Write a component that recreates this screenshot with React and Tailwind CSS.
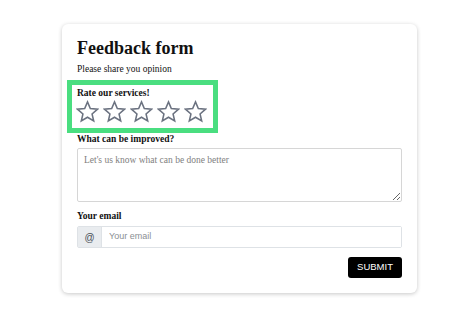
import React from "react";

const Star = () => (
  <svg width="23" height="23" viewBox="0 0 24 24" fill="none" stroke="#6b7280" strokeWidth="1.6" strokeLinejoin="miter">
    <polygon points="12,2 14.94,8.95 22.46,9.6 16.76,14.55 18.47,21.9 12,18 5.53,21.9 7.24,14.55 1.54,9.6 9.06,8.95" />
  </svg>
);

export default function App() {
  return (
    <div className="w-[474px] h-[320px] bg-white overflow-hidden pt-[24px]" style={{ fontFamily: '"Liberation Serif", "Times New Roman", serif' }}>
      <div className="ml-[62px] w-[355px] h-[269px] rounded-[6px] bg-white shadow-[0_1px_4px_rgba(0,0,0,0.22)] px-[15px] pt-[13px] text-[#111]">
        <h2 className="text-[18px] leading-[22px] font-bold">Feedback form</h2>
        <p className="mt-[4px] text-[9.5px] leading-[12px]">Please share you opinion</p>
        <div className="mt-[10px] -ml-[5px] w-[141px] px-[5px] pt-[2px] pb-[5px] outline-[5px] outline-solid outline-[#4ade80]">
          <div className="text-[9.5px] leading-[12px] font-bold">Rate our services!</div>
          <div className="mt-[1px] -ml-[1px] flex gap-[4px]">
            <Star />
            <Star />
            <Star />
            <Star />
            <Star />
          </div>
        </div>
        <div className="mt-[5px] text-[9.5px] leading-[12px] font-bold">What can be improved?</div>
        <textarea
          className="mt-[3px] block w-full h-[54px] border border-[#d6d6d6] rounded-[2px] px-[6px] pt-[5px] text-[9.5px] leading-[12px] placeholder:text-[#808080] outline-none"
          style={{ fontFamily: '"Liberation Serif", "Times New Roman", serif' }}
          placeholder="Let's us know what can be done better"
        />
        <div className="mt-[8px] text-[9.5px] leading-[12px] font-bold">Your email</div>
        <div className="mt-[4px] flex h-[22px] border border-[#dee2e6] rounded-[2px]" style={{ fontFamily: '"Liberation Sans", Arial, sans-serif' }}>
          <div className="w-[24px] bg-[#e9ecef] border-r border-[#dee2e6] flex items-center justify-center text-[10px] text-[#495057]">@</div>
          <input
            className="flex-1 min-w-0 px-[7px] text-[9px] placeholder:text-[#8a8f94] outline-none bg-white"
            placeholder="Your email"
          />
        </div>
        <div className="mt-[9px] flex justify-end">
          <button className="w-[54px] h-[21px] bg-black text-white rounded-[3px] text-[9.5px] flex items-center justify-center" style={{ fontFamily: '"Liberation Sans", Arial, sans-serif' }}>
            SUBMIT
          </button>
        </div>
      </div>
    </div>
  );
}
